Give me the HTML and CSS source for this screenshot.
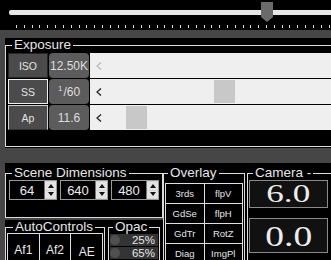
FILE: index.html
```html
<!DOCTYPE html>
<html>
<head>
<meta charset="utf-8">
<link rel="stylesheet" href="styles.css">
</head>
<body>
<div class="top">
  <div class="track"></div>
  <svg class="thumb" width="12" height="20" viewBox="0 0 12 20"><polygon points="0,0 12,0 12,15 6,20 0,15" fill="#6a6a6a"/></svg>
  <div class="ticks">
    <i></i><i></i><i></i><i></i><i></i><i></i><i></i><i></i><i></i><i></i>
    <i></i><i></i><i></i><i></i><i></i><i></i><i></i><i></i><i></i><i></i>
    <i></i><i></i><i></i><i></i><i></i><i></i><i></i><i></i><i></i><i></i>
    <i></i><i></i><i></i><i></i><i></i><i></i><i></i><i></i><i></i><i></i>
    <i></i>
  </div>
</div>

<div class="panel exposure">
  <fieldset class="grp exp">
    <legend class="lg-exp">Exposure</legend>
    <div class="rows">
      <div class="row">
        <div class="btn">ISO</div>
        <div class="val">12.50K</div>
        <div class="slider">
          <svg class="chev dis" width="6" height="8" viewBox="0 0 6 8"><polyline points="5,0.5 1,4 5,7.5" fill="none" stroke="currentColor" stroke-width="1.5"/></svg>
        </div>
      </div>
      <div class="row">
        <div class="btn sel">SS</div>
        <div class="val"><span class="sup">1</span>/60</div>
        <div class="slider">
          <svg class="chev" width="6" height="8" viewBox="0 0 6 8"><polyline points="5,0.5 1,4 5,7.5" fill="none" stroke="currentColor" stroke-width="1.5"/></svg>
          <div class="knob" style="left:124px"></div>
        </div>
      </div>
      <div class="row">
        <div class="btn half">Ap</div>
        <div class="val">11.6</div>
        <div class="slider">
          <svg class="chev" width="6" height="8" viewBox="0 0 6 8"><polyline points="5,0.5 1,4 5,7.5" fill="none" stroke="currentColor" stroke-width="1.5"/></svg>
          <div class="knob" style="left:36px"></div>
        </div>
      </div>
    </div>
  </fieldset>
</div>

<div class="bottom">
  <div class="col1">
    <div class="panel sdp">
      <fieldset class="grp sd">
        <legend class="lg-sd">Scene Dimensions</legend>
        <div class="spins">
          <div class="spin"><span class="num">64</span><span class="arrows"><b class="up"></b><b class="dn"></b></span></div>
          <div class="spin"><span class="num">640</span><span class="arrows"><b class="up"></b><b class="dn"></b></span></div>
          <div class="spin"><span class="num">480</span><span class="arrows"><b class="up"></b><b class="dn"></b></span></div>
        </div>
      </fieldset>
    </div>
    <div class="panel lower">
      <fieldset class="grp ac">
        <legend class="lg-ac">AutoControls</legend>
        <div class="afgrid">
          <div class="cell">Af1</div>
          <div class="cell">Af2</div>
          <div class="cell ae">AE</div>
        </div>
      </fieldset>
      <fieldset class="grp op">
        <legend class="lg-op">Opac</legend>
        <div class="oprows">
          <div class="oprow"><span class="dot"></span><span class="pct">25%</span></div>
          <div class="oprow"><span class="dot"></span><span class="pct">65%</span></div>
        </div>
      </fieldset>
    </div>
  </div>
  <div class="panel col2">
    <fieldset class="grp ov">
      <legend class="lg-ov">Overlay</legend>
      <div class="ovgrid">
        <div class="oc">3rds</div><div class="oc">flpV</div>
        <div class="oc">GdSe</div><div class="oc">flpH</div>
        <div class="oc">GdTr</div><div class="oc">RotZ</div>
        <div class="oc">Diag</div><div class="oc">ImgPl</div>
      </div>
    </fieldset>
  </div>
  <div class="panel col3">
    <fieldset class="grp cam">
      <legend class="lg-cam">Camera -</legend>
      <div class="disp d1"><span>6.0</span></div>
      <div class="disp d2"><span>0.0</span></div>
    </fieldset>
  </div>
</div>
</body>
</html>
```

FILE: styles.css
```css
* { box-sizing: border-box; }
html, body { margin: 0; padding: 0; }
body {
  width: 331px;
  height: 260px;
  overflow: hidden;
  background: #464646;
  font-family: "Liberation Sans", Arial, sans-serif;
  color: #e6e6e6;
}

/* top slider */
.top { height: 30px; background: #000; position: relative; padding-top: 10px; }
.track { margin-left: 9px; height: 5px; background: #e6e6e6; border-radius: 2px 0 0 2px; }
.thumb { position: absolute; left: 261px; top: 2px; display: block; }
.ticks { display: flex; justify-content: space-between; margin: 10px 1px 0 16px; height: 3px; }
.ticks i { width: 1px; height: 3px; background: #d8d8d8; }

.panel { background: #000; }

fieldset.grp { margin: 0; padding: 0; border: 1px solid #dcdcdc; min-width: 0; }
legend { font-size: 13.5px; line-height: 14px; padding: 0 2px; color: #e6e6e6; white-space: pre; }

/* exposure */
.exposure { margin: 8px 0 0 5px; height: 110px; }
.exp { height: 109px; padding: 1px 0 15px 2px !important; border-right: none !important; }
.lg-exp { margin-left: 4px; }
.rows { display: flex; flex-direction: column; gap: 1px; }
.row { display: flex; height: 25px; gap: 1px; }
.btn {
  width: 40px; background: #4b4b4b; border: 1px solid #262626;
  display: flex; align-items: center; justify-content: center;
  font-size: 10.5px; color: #e2e2e2;
}
.btn.sel { border-color: #f0f0f0; }
.btn.half { border-color: #d0d0d0 #d0d0d0 #333 #d0d0d0; }
.val {
  width: 40px; background: #5c5c5c; border-radius: 4px;
  display: flex; align-items: center; justify-content: center;
  font-size: 12px; color: #dcdcdc;
}
.sup { font-size: 8px; position: relative; top: -3px; margin-right: 1px; }
.slider { flex: 1; background: #efefef; position: relative; display: flex; align-items: center; }
.chev { margin-left: 6px; color: #303030; }
.chev.dis { color: #bdbdbd; }
.knob { position: absolute; top: 1px; width: 21px; height: 23px; background: #c8c8c8; }

/* bottom */
.bottom { display: flex; margin: 15px 0 0 5px; height: 97px; }
.col1 { width: 158px; display: flex; flex-direction: column; gap: 2px; }
.sdp { height: 55px; padding-top: 3px; }
.sd { height: 52px; padding: 0 3px !important; }
.lg-sd { margin-left: 3px; }
.spins { display: flex; gap: 3px; }
.spin { width: 48px; height: 20px; border: 1px solid #9a9a9a; display: flex; background: #000; }
.num { flex: 1; display: flex; align-items: center; justify-content: center; font-size: 13px; color: #ececec; }
.arrows { width: 12px; background: #d6d6d6; display: flex; flex-direction: column; gap: 1px; padding: 1px 0; border-left: 1px solid #777; }
.arrows b { flex: 1; display: flex; align-items: center; justify-content: center; background: #e4e4e4; }
.arrows b::before { content: ""; border-left: 3.5px solid transparent; border-right: 3.5px solid transparent; }
.arrows .up::before { border-bottom: 4px solid #111; }
.arrows .dn::before { border-top: 4px solid #111; }

.lower { flex: 1; display: flex; gap: 3px; }
.ac { width: 100px; padding: 0 1px !important; border-bottom: none !important; }
.lg-ac { margin-left: 6px; }
.afgrid { display: grid; grid-template-columns: repeat(3, 1fr); gap: 1px; background: #e0e0e0; padding: 1px 1px 0 1px; margin-top: -1px; height: 30px; }
.cell { background: #000; display: flex; align-items: center; justify-content: center; font-size: 12px; color: #ececec; padding-top: 2px; }
.cell.ae { padding-top: 6px; }
.op { width: 52px; padding: 0 1px !important; border-bottom: none !important; }
.lg-op { margin-left: 3px; }
.oprows { display: flex; flex-direction: column; gap: 1px; }
.oprow { height: 12px; background: #343434; display: flex; align-items: center; justify-content: space-between; overflow: hidden; }
.dot { width: 10px; height: 10px; border-radius: 50%; background: #505050; }
.pct { font-size: 11.5px; color: #e6e6e6; margin-right: 3px; line-height: 12px; }

.col2 { width: 82px; padding-top: 3px; }
.ov { height: 100px; padding: 0 1px !important; border-bottom: none !important; }
.lg-ov { margin-left: 3px; }
.ovgrid { margin-top: 3px; display: grid; grid-template-columns: 1fr 1fr; grid-auto-rows: 19px; gap: 1px; background: #e0e0e0; padding: 1px; width: 78px; }
.oc { background: #000; display: flex; align-items: center; justify-content: center; font-size: 9.5px; color: #e6e6e6; }

.col3 { flex: 1; padding: 3px 0 0 2px; }
.cam { height: 100px; padding: 0 1px !important; border-right: none !important; border-bottom: none !important; }
.lg-cam { margin-left: 4px; }
.disp { width: 79px; border: 1px solid #8a8a8a; background: #111; display: flex; align-items: center; justify-content: center; font-family: "Liberation Serif", "Times New Roman", serif; color: #ececec; }
.disp span { display: inline-block; }
.d1 { height: 28px; font-size: 26px; }
.d1 span { transform: scaleX(1.35); }
.d2 { height: 35px; margin-top: 10px; font-size: 30px; }
.d2 span { transform: scaleX(1.25); }
```
